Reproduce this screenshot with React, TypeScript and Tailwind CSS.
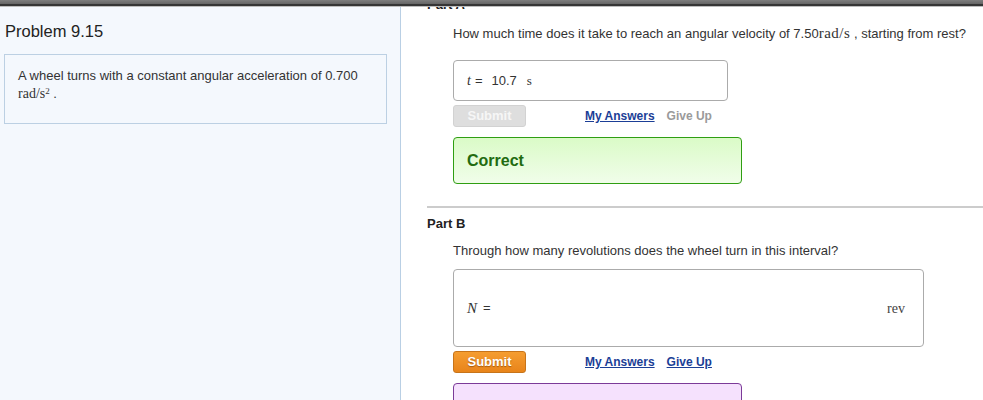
const sans = { fontFamily: '"Liberation Sans", Arial, sans-serif' };

function Serif({ children, className = "" }: { children: React.ReactNode; className?: string }) {
  return <span className={`font-['Liberation_Serif',serif] ${className}`}>{children}</span>;
}

function ActionRow({ active }: { active: boolean }) {
  return (
    <div className="flex items-center h-[22px]">
      {active ? (
        <button className="w-[73px] h-[22px] rounded-[3px] border border-[#c7741a] bg-gradient-to-b from-[#f59d30] to-[#e8841a] text-[13px] font-bold text-white [text-shadow:0_1px_1px_rgba(120,60,0,0.6)]">
          Submit
        </button>
      ) : (
        <button className="w-[73px] h-[22px] rounded-[3px] border border-[#d2d2d2] bg-[#dedede] text-[13px] font-bold text-[#f6f6f6]">
          Submit
        </button>
      )}
      <a className="ml-[59px] text-[12px] font-bold text-[#1b3e96] underline">My Answers</a>
      <a className={`ml-[12px] text-[12px] font-bold ${active ? "text-[#1b3e96] underline" : "text-[#9a9a9a]"}`}>
        Give Up
      </a>
    </div>
  );
}

export default function App() {
  return (
    <div className="w-[983px] h-[400px] overflow-hidden flex flex-col bg-white text-[#333]" style={sans}>
      <div className="h-[4px] bg-gradient-to-b from-[#7e7e7e] to-[#656565]" />
      <div className="h-[2px] bg-[#353535]" />
      <div className="h-[1px] bg-[#bdbdbd]" />

      <div className="flex flex-1 min-h-0">
        <aside className="w-[401px] shrink-0 bg-[#f4f8fd] border-r border-[#b9cfe4] pt-[15px]">
          <h1 className="pl-[5px] text-[16.5px] leading-[18px] text-[#222]">Problem 9.15</h1>
          <div className="ml-[4px] mt-[14px] w-[383px] h-[70px] border border-[#bcd0e3] bg-[#f4f8fd] pl-[13px] pt-[12px] text-[13px] leading-[18px] text-[#333]">
            <p>A wheel turns with a constant angular acceleration of 0.700</p>
            <p>
              <Serif className="text-[14px]">
                rad/s<sup className="text-[9px]">2</sup>
              </Serif>{" "}
              .
            </p>
          </div>
        </aside>

        <main className="flex-1 min-w-0 overflow-hidden">
          <div className="pl-[26px]">
            <h2 className="-mt-[10px] text-[13px] leading-[16px] font-bold text-[#222]">Part A</h2>
          </div>

          <section className="pl-[52px]">
            <p className="mt-[12px] h-[16px] text-[13px] leading-[16px] text-[#333]">
              How much time does it take to reach an angular velocity of 7.50
              <Serif className="text-[15px] tracking-[0.5px]">rad/s</Serif> , starting from rest?
            </p>
            <div className="mt-[19px] w-[275px] h-[41px] rounded-[4px] border border-[#ababab] flex items-center pl-[13px] text-[#333]">
              <Serif className="italic text-[14px]">t</Serif>
              <span className="ml-[4px] text-[13px]">=</span>
              <span className="ml-[9px] text-[13px]">10.7</span>
              <Serif className="ml-[10px] text-[13px]">s</Serif>
            </div>
            <div className="mt-[4px]">
              <ActionRow active={false} />
            </div>
            <div className="mt-[10px] w-[289px] h-[47px] rounded-[4px] border border-[#2f9e12] bg-gradient-to-b from-[#dafbc7] to-[#f1fdea] flex items-center pl-[13px]">
              <span className="text-[16px] font-bold text-[#226b10]">Correct</span>
            </div>
          </section>

          <div className="ml-[26px] mt-[22px] h-[2px] bg-[#cccccc]" />

          <div className="pl-[26px]">
            <h2 className="mt-[8px] text-[13px] leading-[16px] font-bold text-[#222]">Part B</h2>
          </div>

          <section className="pl-[52px]">
            <p className="mt-[11px] text-[13px] leading-[16px] text-[#333]">
              Through how many revolutions does the wheel turn in this interval?
            </p>
            <div className="mt-[10px] w-[471px] h-[78px] rounded-[4px] border border-[#ababab] flex items-center pl-[13px] pr-[18px] text-[#333]">
              <Serif className="italic text-[15px]">N</Serif>
              <span className="ml-[6px] text-[13px]">=</span>
              <Serif className="ml-auto text-[14px] text-[#444]">rev</Serif>
            </div>
            <div className="mt-[4px]">
              <ActionRow active />
            </div>
            <div className="mt-[10px] w-[289px] h-[40px] rounded-t-[4px] border border-[#7b3a98] bg-[#f5e1fd]" />
          </section>
        </main>
      </div>
    </div>
  );
}
